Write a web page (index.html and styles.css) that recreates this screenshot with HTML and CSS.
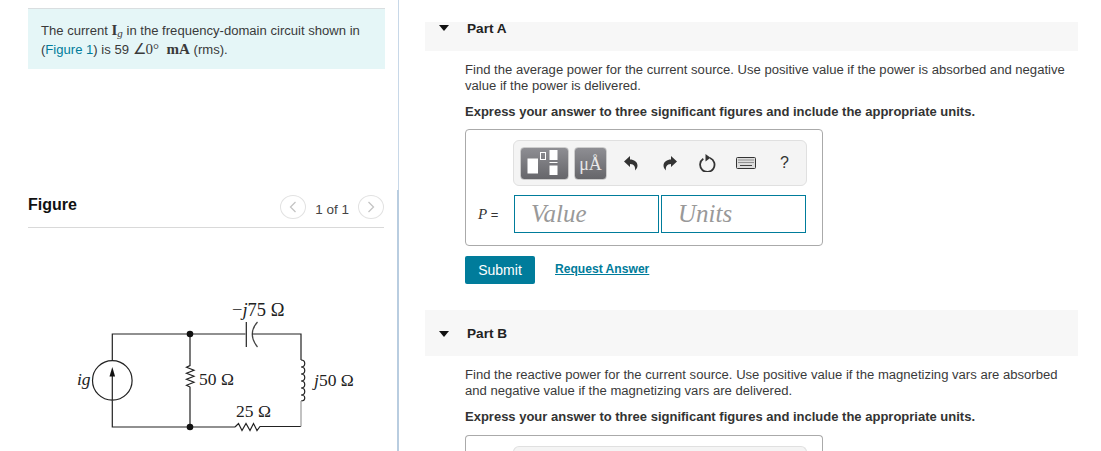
FILE: index.html
```html
<!DOCTYPE html>
<html lang="en">
<head>
<meta charset="utf-8">
<title>Part A</title>
<link rel="stylesheet" href="styles.css">
</head>
<body>
<div class="page">
  <aside class="left">
    <div class="intro">
      <p>The current <span class="m b">I</span><sub class="m i">g</sub> in the frequency-domain circuit shown in (<a href="#">Figure 1</a>) is 59 <span class="m">∠0° &nbsp;<span class="b">mA</span></span> (rms).</p>
    </div>
    <div class="figure-head">
      <h2>Figure</h2>
      <div class="pager">
        <span class="circle"><svg width="8" height="12" viewBox="0 0 8 12"><path d="M6.500 1 1.500 6l5 5" fill="none" stroke="#c4c4c4" stroke-width="1.300"/></svg></span>
        <span class="count">1 of 1</span>
        <span class="circle"><svg width="8" height="12" viewBox="0 0 8 12"><path d="M1.500 1l5 5-5 5" fill="none" stroke="#c4c4c4" stroke-width="1.300"/></svg></span>
      </div>
    </div>
    <svg class="circuit" width="369" height="160" viewBox="28 291 369 160">
      <g fill="none" stroke="#222" stroke-width="1.200">
        <path d="M245.500 334H112.300V360.500M112.300 400.300V427H235"/>
        <circle cx="112.300" cy="380.400" r="19.800"/>
        <path d="M112.300 400V372"/>
        <path d="M190 334V365.500l-3.500 1.700 7.500 3-7.500 3 7.500 3-7.500 3 7.500 3-7.500 3 3.500 1.800V427"/>
        <path d="M246.300 322V347"/>
        <path d="M257.500 322Q247 334 257.500 347" stroke="#444"/>
        <path d="M252 334H301V360"/>
        <path d="M301 360c5 0 5 7 0 7 5 0 5 7 0 7 5 0 5 7 0 7 5 0 5 7 0 7 5 0 5 7 0 7 5 0 5 6 0 6"/>
        <path d="M235 427l3.500-3.500 3.500 7 4-7 4 7 3.500-7 3.500 7 3-4H301"/>
      </g>
      <path d="M301 401V426.500" stroke="#a8a8a8" stroke-width="1.400" fill="none"/>
      <path d="M112.300 367l-2.800 9.500h5.600z" fill="#111"/>
      <circle cx="190" cy="334" r="3.300" fill="#111"/>
      <circle cx="190" cy="427" r="3.300" fill="#111"/>
      <text class="ct big" x="232" y="316"><tspan>−</tspan><tspan class="ci">j</tspan>75 Ω</text>
      <text class="ct" x="199" y="385">50 Ω</text>
      <text class="ct" x="314" y="386"><tspan class="ci">j</tspan>50 Ω</text>
      <text class="ct" x="236" y="417">25 Ω</text>
      <text class="ct ci" x="77" y="385">ig</text>
    </svg>
  </aside>
  <div class="divider"><span class="div-top"></span><span class="div-bottom"></span></div>
  <main class="right">
    <section class="part">
      <h3 class="part-head first"><span class="caret"></span>Part A</h3>
      <div class="part-body">
        <p>Find the average power for the current source. Use positive value if the power is absorbed and negative value if the power is delivered.</p>
        <p class="strong">Express your answer to three significant figures and include the appropriate units.</p>
        <div class="answer">
          <div class="toolbar">
            <span class="tool wide">
              <svg width="38" height="26" viewBox="0 0 38 26">
                <rect x="1.500" y="8.500" width="10.500" height="15" fill="#fff"/>
                <rect x="14.500" y="2.500" width="5" height="7" fill="none" stroke="#fff"/>
                <rect x="23.500" y="0" width="8" height="10" fill="#fff"/>
                <rect x="23.500" y="12" width="8" height="1" fill="#fff"/>
                <rect x="23.500" y="15.500" width="8" height="9.500" fill="#fff"/>
              </svg>
            </span>
            <span class="tool unit">μÅ</span>
            <svg class="icon undo" width="14" height="15" viewBox="0 0 14 15"><path d="M0 5.500 6 0V3.500C10 3.500 13.500 6 13.500 9.500 13.500 11.500 12.500 13 11 14.500 11.500 11 10.500 8 6 8V11z" fill="#333"/></svg>
            <svg class="icon redo" width="14" height="15" viewBox="0 0 14 15"><path d="M14 5.500 8 0V3.500C4 3.500 .5 6 .5 9.500 .5 11.500 1.500 13 3 14.500 2.500 11 3.500 8 8 8V11z" fill="#333"/></svg>
            <svg class="icon reset" width="18" height="18" viewBox="0 0 18 18"><path d="M5.300 4.700A7.200 7.200 0 1 0 12 4" fill="none" stroke="#333" stroke-width="1.800"/><path d="M7.500 0 12.500 3.800 7.500 7.500z" fill="#333"/></svg>
            <svg class="icon kbd" width="20" height="12" viewBox="0 0 20 12"><rect x="0.500" y="0.500" width="19" height="11" rx="1" fill="#dcdcdc" stroke="#333"/><path d="M2.500 3h15M2.500 5.500h15" stroke="#444" stroke-dasharray="1 1" fill="none"/><path d="M4 8.500h12" stroke="#444" fill="none"/></svg>
            <span class="help">?</span>
          </div>
          <div class="entry">
            <label><i class="m">P</i> =</label>
            <span class="field">Value</span>
            <span class="field">Units</span>
          </div>
        </div>
        <div class="actions">
          <button class="submit">Submit</button>
          <a class="request" href="#">Request Answer</a>
        </div>
      </div>
    </section>
    <section class="part">
      <h3 class="part-head second"><span class="caret"></span>Part B</h3>
      <div class="part-body">
        <p>Find the reactive power for the current source. Use positive value if the magnetizing vars are absorbed and negative value if the magnetizing vars are delivered.</p>
        <p class="strong">Express your answer to three significant figures and include the appropriate units.</p>
        <div class="answer cut">
          <div class="toolbar"></div>
        </div>
      </div>
    </section>
  </main>
</div>
</body>
</html>
```
FILE: styles.css
```css
* { box-sizing: border-box; }
html, body { margin: 0; height: 451px; overflow: hidden; background: #fff; }
body { font: 13.08px/16px "Liberation Sans", Arial, sans-serif; color: #3a3a3a; }
p { margin: 0; }
a { color: #007c9b; text-decoration: none; }
.page { display: flex; height: 451px; }
.left { width: 397px; flex: none; padding: 8px 12px 0 28px; }
.intro { height: 61px; background: #e5f6f7; border-top: 1px solid #d9dee0; padding: 12px 13px 0; line-height: 18px; }
.m { font-family: "Liberation Serif", serif; font-size: 15px; }
.b { font-weight: bold; }
.i { font-style: italic; }
sub.m { font-size: 11px; line-height: 0; vertical-align: -2px; }
.figure-head { display: flex; justify-content: space-between; align-items: center; margin-top: 124px; height: 35px; border-bottom: 1px solid #d9d9d9; padding-bottom: 2px; width: 356px; }
.figure-head h2 { margin: 0 0 8px; font-size: 16px; font-weight: bold; color: #111; }
.pager { display: flex; align-items: center; gap: 9px; }
.circle { width: 26px; height: 24px; border: 1px solid #e2e2e2; border-radius: 50%; display: flex; align-items: center; justify-content: center; margin-bottom: 4px; }
.count { font-size: 13.5px; color: #444; padding-top: 2px; }
.circuit { display: block; margin: 63px 0 0 0; overflow: hidden; }
.ct { font: 17.5px "Liberation Serif", serif; fill: #222; }
.ct.big { font-size: 18.5px; }
.ci { font-style: italic; }
.divider { width: 2px; flex: none; display: flex; flex-direction: column; }
.div-top { height: 190px; width: 1px; margin-left: 1px; background: #c8d8e8; }
.div-bottom { flex: 1; background: #b9cde0; }
.right { flex: 1; padding: 22px 23px 0 26px; min-width: 0; }
.part-head { display: flex; align-items: center; margin: 0; height: 46px; background: #f7f7f7; font-size: 13.6px; font-weight: bold; color: #222; padding-left: 14px; }
.part-head.first { height: 29px; align-items: flex-start; line-height: 13px; }
.part-head.second { padding-top: 1px; }
.caret { width: 0; height: 0; border: 5px solid transparent; border-top: 6px solid #111; border-bottom: 0; margin-right: 18px; }
.first .caret { margin-top: 3px; }
.part-body { padding: 11px 8px 0 40px; }
.strong { font-size: 13px; font-weight: bold; margin-top: 10px; color: #333; }
.answer { width: 358px; height: 117px; margin-top: 9px; border: 1px solid #aaa; border-radius: 4px; padding: 10px 0 0 47px; background: #fff; }
.toolbar { display: flex; align-items: center; width: 294px; height: 46px; background: #f4f4f4; border: 1px solid #e0e0e0; border-radius: 6px; padding-left: 6px; }
.tool { display: flex; align-items: center; justify-content: center; height: 33px; border-radius: 4px; background: linear-gradient(#8e8e93, #66666a); color: #fff; border: 1px solid #ccc; }
.wide { width: 49px; }
.unit { width: 33px; margin-left: 5px; font: 18px "Liberation Serif", serif; color: #e8e8e8; padding-top: 2px; }
.icon { display: block; flex: none; }
.undo { margin-left: 17px; }
.redo { margin-left: 25px; }
.reset { margin-left: 21px; }
.kbd { margin-left: 20px; }
.help { margin-left: 24px; font-size: 16px; color: #333; }
.entry { display: flex; align-items: center; gap: 2px; margin: 9px 0 0 -47px; padding-left: 12px; }
.entry label { width: 34px; font-size: 13px; color: #333; }
.entry .m { font-size: 15px; }
.field { width: 145px; height: 38px; border: 1px solid #007c9b; background: #fff; padding-left: 16px; font: italic 25px/36px "Liberation Serif", serif; color: #999; }
.actions { display: flex; align-items: center; gap: 20px; margin-top: 10px; height: 28px; }
.submit { width: 70px; height: 28px; background: #007c9b; border: 0; border-radius: 2px; color: #fff; font: 14px "Liberation Sans", sans-serif; padding: 0; }
.request { font-size: 12.1px; font-weight: bold; text-decoration: underline; position: relative; top: -1px; }
.part + .part { margin-top: 26px; }
.answer.cut { height: 17px; margin-top: 10px; border-bottom: 0; border-radius: 4px 4px 0 0; overflow: hidden; }
.cut .toolbar { height: 6px; border-bottom: 0; border-radius: 6px 6px 0 0; }
```
